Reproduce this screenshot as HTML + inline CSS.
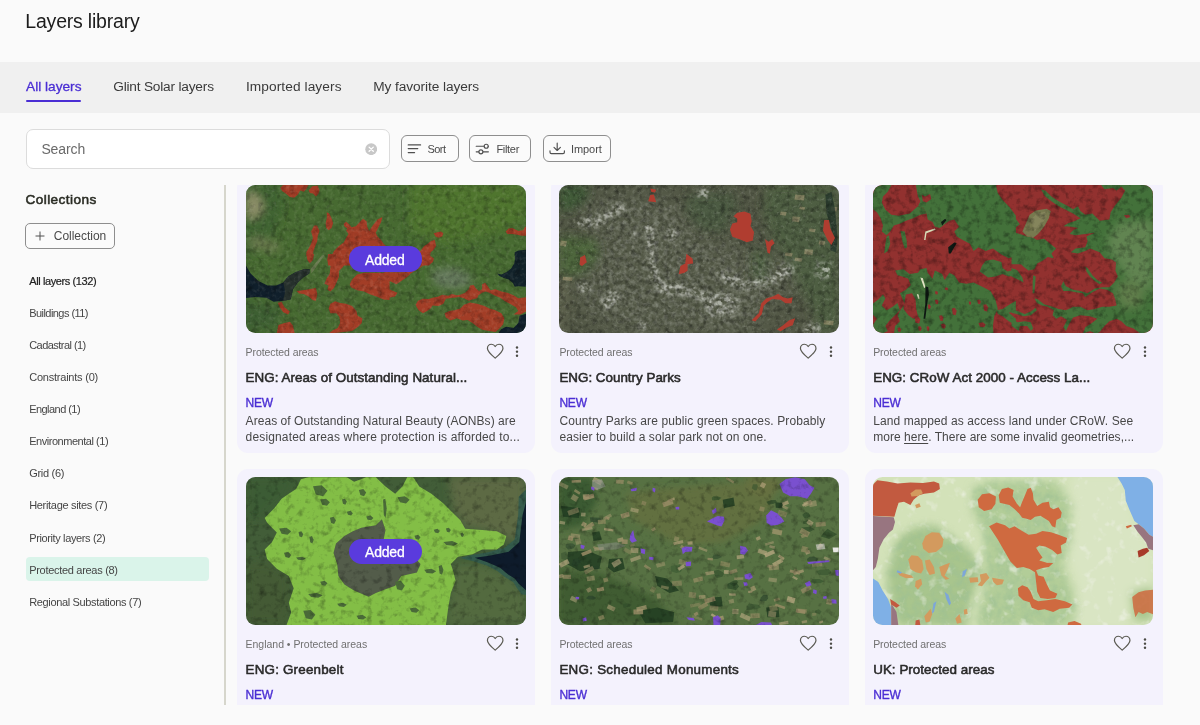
<!DOCTYPE html><html lang="en"><head><meta charset="utf-8"><title>Layers library</title><style>
*{box-sizing:border-box;margin:0;padding:0}
html,body{width:1200px;height:725px;overflow:hidden;background:#fafafa}
body{font-family:"Liberation Sans",sans-serif;color:#2b2b2b;position:relative;will-change:transform;opacity:0.9999}
.t{position:absolute;white-space:nowrap}
h1{position:absolute;white-space:nowrap;font-weight:400;color:#1c1c1c}
.tabbar{position:absolute;left:0;top:62px;width:1200px;height:50.5px;background:#f0f0f0}
.tab{color:#3a3a3a}
.tab.on{color:#4a2ed4;-webkit-text-stroke:0.3px #4a2ed4}
.uline{position:absolute;left:25.8px;top:99.6px;width:55px;height:2px;background:#4a2ed4;border-radius:1.2px}
.search{position:absolute;left:26px;top:128.5px;width:363.5px;height:40px;background:#fff;border:1px solid #dcdcdc;border-radius:7px}
.ph{color:#6a6a6a}
.clr{position:absolute;left:365px;top:142.8px;width:12.4px;height:12.4px}
.btn{position:absolute;border:1px solid #8e8e8e;border-radius:6px;background:#fbfbfb}
.bt{color:#4a4a4a}
.ico{position:absolute}
.coll{color:#2a2c24;-webkit-text-stroke:0.55px #2a2c24}
.li{color:#454545}
.sel{position:absolute;left:25.5px;top:557.1px;width:183.3px;height:24px;background:#daf4ea;border-radius:4px}
.vline{position:absolute;left:224.3px;top:184.8px;width:1.6px;height:520.2px;background:#d6d6cc}
.clip{position:absolute;left:230px;top:184.8px;width:970px;height:520.2px;overflow:hidden}
.card{position:absolute;width:298.2px;height:276px;background:#f4f2fd;border-radius:11px}
.card svg.map{position:absolute;left:8.4px;top:8.1px;width:280px;height:148.2px;border-radius:9.5px;display:block}
.cat{color:#707070}
.ttl{color:#2a2a2a;-webkit-text-stroke:0.55px #2a2a2a}
.new{color:#4a2ed4;-webkit-text-stroke:0.35px #4a2ed4}
.desc{color:#474747}
.heart{position:absolute;left:248.4px;top:166.3px}
.keb{position:absolute;left:278px;top:169.0px}
.added{position:absolute;left:112px;top:69.7px;width:73px;height:25.4px;border-radius:12.7px;background:#5a3bdd}
.addt{color:#fff;-webkit-text-stroke:0.3px #fff}
u{text-underline-offset:1.5px;text-decoration-thickness:1px}
</style></head><body>
<h1 style="left:25.3px;top:9.24px;font-size:19.5px;line-height:24px;letter-spacing:-0.203px">Layers library</h1>
<div class="tabbar"></div>
<div class="t tab on" style="left:26.1px;top:77.95px;font-size:13.7px;line-height:18px;letter-spacing:-0.014px;">All layers</div>
<div class="t tab" style="left:113.2px;top:77.95px;font-size:13.7px;line-height:18px;letter-spacing:-0.201px;">Glint Solar layers</div>
<div class="t tab" style="left:245.9px;top:77.95px;font-size:13.7px;line-height:18px;letter-spacing:0.091px;">Imported layers</div>
<div class="t tab" style="left:373.2px;top:77.95px;font-size:13.7px;line-height:18px;letter-spacing:-0.073px;">My favorite layers</div>
<div class="uline"></div>
<div class="search"></div>
<div class="t ph" style="left:41.4px;top:140.15px;font-size:14px;line-height:18px;letter-spacing:-0.112px;">Search</div>
<svg class="clr" viewBox="0 0 13 13"><circle cx="6.5" cy="6.5" r="6.2" fill="#c8c8c8"/><path d="M4.3 4.3 L8.7 8.7 M8.7 4.3 L4.3 8.7" stroke="#fff" stroke-width="1.4" stroke-linecap="round"/></svg>
<div class="btn" style="left:400.6px;top:135.1px;width:58.2px;height:27px"></div>
<svg class="ico" style="left:406px;top:142px" width="17" height="14" viewBox="0 0 17 14"><path d="M2.2 2.9 H14.6 M2.2 6.6 H11.8 M2.2 10.6 H8.6" stroke="#505050" stroke-width="1.15" stroke-linecap="round" fill="none"/></svg>
<div class="t bt" style="left:427.4px;top:142.29px;font-size:11px;line-height:14px;letter-spacing:-0.525px;">Sort</div>
<div class="btn" style="left:469.4px;top:135.1px;width:62.1px;height:27px"></div>
<svg class="ico" style="left:474px;top:142px" width="17" height="14" viewBox="0 0 17 14"><path d="M2.2 4.2 H9.9 M14.3 4.2 H14.4 M2.2 9.8 H4.7 M9.1 9.8 H14.4" stroke="#505050" stroke-width="1.15" stroke-linecap="round" fill="none"/><circle cx="12.2" cy="4.2" r="2" fill="none" stroke="#505050" stroke-width="1.15"/><circle cx="6.9" cy="9.8" r="2" fill="none" stroke="#505050" stroke-width="1.15"/></svg>
<div class="t bt" style="left:496.4px;top:142.29px;font-size:11px;line-height:14px;letter-spacing:-0.309px;">Filter</div>
<div class="btn" style="left:542.8px;top:135.1px;width:67.8px;height:27px"></div>
<svg class="ico" style="left:548px;top:141px" width="18" height="15" viewBox="0 0 18 15"><path d="M9.2 2 V9.4 M6 6.4 L9.2 9.5 L12.4 6.4 M2 9.8 V11.2 Q2 12.6 3.4 12.6 H15 Q16.4 12.6 16.4 11.2 V9.8" stroke="#505050" stroke-width="1.15" stroke-linecap="round" stroke-linejoin="round" fill="none"/></svg>
<div class="t bt" style="left:571px;top:142.29px;font-size:11px;line-height:14px;letter-spacing:-0.075px;">Import</div>
<div class="t coll" style="left:25.4px;top:191.19px;font-size:13.6px;line-height:18px;letter-spacing:0.451px;">Collections</div>
<div class="btn" style="left:25.3px;top:223px;width:89.7px;height:26px;border-radius:5px"></div>
<svg class="ico" style="left:35.3px;top:230.7px" width="10" height="10" viewBox="0 0 11 11"><path d="M5.5 1 V10 M1 5.5 H10" stroke="#505050" stroke-width="1.1" stroke-linecap="round"/></svg>
<div class="t bt" style="left:53.8px;top:228.74px;font-size:12px;line-height:14px;letter-spacing:-0.033px;">Collection</div>
<div class="sel"></div>
<div class="t li" style="left:29.2px;top:273.99px;font-size:11px;line-height:14px;letter-spacing:-0.391px;color:#222;-webkit-text-stroke:0.2px #222;">All layers (132)</div>
<div class="t li" style="left:29.2px;top:306.06px;font-size:11px;line-height:14px;letter-spacing:-0.549px;">Buildings (11)</div>
<div class="t li" style="left:29.2px;top:338.13px;font-size:11px;line-height:14px;letter-spacing:-0.54px;">Cadastral (1)</div>
<div class="t li" style="left:29.2px;top:370.2px;font-size:11px;line-height:14px;letter-spacing:-0.224px;">Constraints (0)</div>
<div class="t li" style="left:29.2px;top:402.27px;font-size:11px;line-height:14px;letter-spacing:-0.547px;">England (1)</div>
<div class="t li" style="left:29.2px;top:434.34px;font-size:11px;line-height:14px;letter-spacing:-0.463px;">Environmental (1)</div>
<div class="t li" style="left:29.2px;top:466.41px;font-size:11px;line-height:14px;letter-spacing:-0.297px;">Grid (6)</div>
<div class="t li" style="left:29.2px;top:498.48px;font-size:11px;line-height:14px;letter-spacing:-0.315px;">Heritage sites (7)</div>
<div class="t li" style="left:29.2px;top:530.55px;font-size:11px;line-height:14px;letter-spacing:-0.374px;">Priority layers (2)</div>
<div class="t li" style="left:29.2px;top:562.62px;font-size:11px;line-height:14px;letter-spacing:-0.298px;">Protected areas (8)</div>
<div class="t li" style="left:29.2px;top:594.69px;font-size:11px;line-height:14px;letter-spacing:-0.35px;">Regional Substations (7)</div>
<div class="vline"></div>
<div class="clip">
<div class="card" style="left:7.2px;top:-8.0px"><svg class="map" viewBox="0 0 280 148" preserveAspectRatio="none"><defs><filter id="n1" x="0" y="0" width="100%" height="100%"><feTurbulence type="fractalNoise" baseFrequency="0.16" numOctaves="3" seed="4"/><feColorMatrix values="0 0 0 0 0  0 0 0 0 0  0 0 0 0 0  0.5 0.5 0 0 -0.47"/></filter><filter id="l1" x="0" y="0" width="100%" height="100%"><feTurbulence type="fractalNoise" baseFrequency="0.25" numOctaves="3" seed="9"/><feColorMatrix values="0 0 0 0 1  0 0 0 0 1  0 0 0 0 0.85  0.6 0 0.6 0 -0.58"/></filter><filter id="g1" filterUnits="userSpaceOnUse" x="0" y="0" width="280" height="148"><feGaussianBlur stdDeviation="4"/></filter></defs><rect width="280" height="148" fill="#476a31"/><g filter="url(#g1)"><polygon points="-2.6,-1.8 33.6,-1.8 37.3,22.4 28.8,46.5 11.9,65.9 -2.6,70.7" fill="#3f6330" /><polygon points="163.6,-1.8 279.6,-1.8 279.6,34.4 248.1,48.9 199.8,58.6 163.6,44.1" fill="#50742f" /><polygon points="185.3,84.7 207.1,81.1 224.0,88.3 226.4,100.4 207.1,105.2 187.7,100.4" fill="#63785a" /><polygon points="-0.2,10.3 4.6,6.7 11.9,10.3 16.7,17.5 17.3,24.8 13.1,29.6 7.1,34.4 1.0,32.0" fill="#8c8e68" /><polygon points="2.2,55.0 11.9,51.4 24.0,56.2 36.1,61.0 30.0,67.1 16.7,64.7 4.6,62.2" fill="#6d7d50" /><polygon points="-2.6,116.1 21.6,118.5 37.3,125.8 28.8,142.7 -2.6,147.5" fill="#3c5e30" /></g><polygon points="-3.8,77.4 0.4,81.1 4.6,88.3 11.9,95.6 21.6,100.4 30.0,100.4 37.3,97.4 42.1,91.3 49.4,87.1 57.8,84.1 63.9,84.1 63.3,88.3 57.8,91.9 51.8,97.4 46.9,104.0 45.7,110.1 44.5,114.3 37.3,115.5 27.6,116.7 20.4,112.5 9.5,111.9 -3.8,113.1" fill="#101f2b" /><polygon points="37.3,97.4 42.1,91.3 49.4,87.1 57.8,84.1 63.9,84.1 63.3,88.3 57.8,91.9 51.8,97.4 46.9,104.0 45.7,110.1 44.5,114.3 37.3,115.5 39.1,106.4" fill="#26302c" /><polygon points="251.2,88.3 255.4,89.5 260.2,87.1 265.1,83.5 268.1,78.7 269.3,72.6 268.7,69.0 280.8,69.0 280.8,101.6 272.3,101.0 268.7,101.6 266.9,98.0 262.6,94.4 257.2,92.6 253.0,90.7" fill="#12222a" /><polygon points="268.7,67.1 272.3,65.3 280.8,64.7 280.8,80.4 269.3,80.4" fill="#12222a" /><polygon points="251.8,148.7 255.4,143.9 260.2,141.5 267.5,142.7 272.3,137.9 273.5,130.6 280.8,128.2 280.8,148.7" fill="#101f2b" /><polygon points="65.1,83.5 69.9,77.4 75.9,70.2 78.4,70.2 72.3,78.7 67.5,85.9 65.1,88.3" fill="#6e7b55" opacity="0.8"/><polygon points="34.3,3.0 38.5,-1.8 63.3,-1.8 60.2,4.2 57.8,6.7 54.2,5.4 51.8,9.7 48.1,12.7 43.9,12.1 39.7,8.5 36.1,6.1" fill="#a23d26" /><polygon points="62.6,5.4 66.3,1.2 71.7,0.6 73.5,5.4 72.3,9.1 69.9,11.5 66.9,8.5 63.9,7.9" fill="#a23d26" /><polygon points="80.8,27.2 83.2,28.4 85.6,33.2 87.1,38.1 85.6,42.9 82.6,45.1 80.2,42.9 79.6,38.1 80.8,33.2" fill="#a23d26" /><polygon points="65.1,46.5 68.1,40.5 71.1,40.5 73.5,45.9 71.7,51.4 71.3,56.2 69.3,61.0 67.5,65.9 66.9,71.9 63.3,77.3 61.4,73.1 60.2,67.1 62.6,63.4 65.1,58.6 66.9,52.6" fill="#a23d26" /><polygon points="97.7,38.7 100.1,36.6 103.1,39.3 105.5,42.3 109.8,41.1 113.4,37.5 117.0,33.8 120.6,36.3 121.3,41.7 123.1,45.9 126.7,40.5 131.5,34.4 136.4,32.0 135.1,36.9 132.1,42.9 129.7,47.7 131.5,51.4 135.1,55.0 137.6,58.6 140.0,61.0 140.0,80.4 82.0,80.4 81.4,73.7 85.6,70.7 88.0,65.9 92.9,61.0 97.7,57.4 100.1,52.6 102.5,48.9 100.1,45.3 101.3,43.5 98.3,41.1" fill="#a23d26" /><polygon points="187.7,48.3 191.4,47.1 195.0,46.5 197.4,48.3 196.2,51.4 192.6,52.8 189.5,51.4" fill="#a23d26" /><polygon points="185.3,55.6 188.9,55.0 190.1,61.0 187.7,64.7 184.7,67.1 184.1,70.7 187.7,73.1 187.1,76.7 182.9,80.4 137.0,80.4 137.0,61.0 174.4,65.9 178.1,61.0 181.7,58.6" fill="#a23d26" /><polygon points="259.6,46.5 262.6,43.5 266.3,42.9 269.9,44.7 272.3,45.9 277.1,45.3 279.0,41.7 280.8,41.7 280.8,50.8 275.9,50.8 271.1,49.6 266.3,48.9 261.4,48.9" fill="#a23d26" /><polygon points="60.2,69.0 68.1,69.0 66.9,75.0 63.9,78.1 61.4,75.0" fill="#a23d26" /><polygon points="82.0,69.0 103.7,69.0 100.1,77.4 96.5,82.3 92.9,85.9 92.9,91.9 90.4,98.0 88.0,102.8 84.4,106.4 81.4,104.6 82.6,100.4 78.4,98.6 80.8,93.2 83.8,88.3 84.4,81.1 81.4,75.0" fill="#a23d26" /><polygon points="103.7,99.2 106.1,94.4 111.0,89.5 118.2,87.7 143.6,87.7 143.6,114.9 137.6,114.3 130.3,111.3 123.1,108.9 118.2,106.4 111.0,105.2 104.9,102.2" fill="#a23d26" /><polygon points="50.6,105.8 60.2,104.6 69.9,102.8 71.3,108.9 69.9,115.5 66.9,115.1 62.6,111.3 57.8,108.9 53.0,108.3" fill="#a23d26" /><polygon points="31.8,117.9 35.5,116.7 38.5,122.2 43.9,126.4 42.1,129.4 37.3,127.0 33.6,122.2" fill="#a23d26" /><polygon points="82.6,123.4 84.4,118.5 89.2,116.1 94.1,117.9 100.1,118.5 106.1,120.9 110.4,125.8 111.6,130.6 116.4,133.0 115.8,137.9 112.2,141.5 106.1,145.7 82.0,148.7 86.8,145.1 91.6,142.7 94.1,137.9 93.5,131.8 90.4,128.2 84.4,128.2" fill="#a23d26" /><polygon points="30.6,148.7 32.4,139.7 38.5,137.9 43.9,136.7 46.9,140.3 48.8,148.7" fill="#a23d26" /><polygon points="175.6,69.0 187.7,73.8 185.3,77.4 178.1,79.9 173.2,83.5 164.8,88.3 161.1,91.9 153.9,96.8 150.3,99.2 144.2,96.2 138.2,95.6 138.2,87.1 157.5,87.1 169.6,85.9 175.6,79.9" fill="#a23d26" /><polygon points="138.2,102.8 144.2,104.6 151.5,107.7 149.1,111.3 143.0,112.5 138.2,114.3" fill="#a23d26" /><polygon points="169.6,119.7 172.0,115.5 176.9,113.7 182.9,113.9 186.5,112.5 192.6,111.3 196.2,109.5 202.2,110.7 205.9,108.9 210.7,110.1 214.3,109.5 219.1,107.7 222.8,104.0 224.0,100.4 227.6,99.8 230.0,103.4 233.0,105.8 236.1,104.0 236.1,99.2 239.1,97.7 242.1,101.6 244.5,105.2 249.4,104.0 255.4,106.4 261.4,107.7 267.5,110.1 272.3,113.1 280.8,111.9 280.8,125.8 274.7,129.4 267.5,129.4 272.3,125.8 269.9,122.2 263.9,118.5 259.0,116.1 254.2,112.5 248.1,110.1 243.3,107.7 239.7,106.4 236.1,107.7 232.4,110.1 231.2,113.1 226.4,114.3 222.8,115.5 217.9,113.1 213.1,111.9 207.1,112.5 199.8,113.7 197.4,118.5 192.6,120.9 186.5,120.3 184.7,123.4 181.1,125.8 176.9,128.0 172.6,125.2 170.8,122.2" fill="#a23d26" /><polygon points="198.6,128.2 203.4,125.8 208.3,125.2 214.3,123.4 217.9,119.7 224.0,117.3 231.2,118.5 238.5,120.9 243.3,123.4 249.4,125.2 255.4,128.2 258.4,133.0 257.2,139.1 253.0,143.9 249.4,146.9 243.3,145.7 236.1,144.5 231.2,141.5 226.4,137.9 221.6,134.8 216.7,135.4 210.7,133.0 204.6,135.4 199.8,132.4" fill="#a23d26" /><rect width="280" height="148" filter="url(#n1)"/><rect width="280" height="148" filter="url(#l1)" opacity="0.3"/></svg><div class="added"></div><div class="t addt" style="left:127.9px;top:75.25px;font-size:14px;line-height:16px;letter-spacing:-0.221px;">Added</div><div class="t cat" style="left:8.4px;top:167.96px;font-size:10.5px;line-height:14px;letter-spacing:-0.08px;">Protected areas</div><svg class="heart" width="18.4" height="16.4" viewBox="0 0 18 16"><path d="M9 14.8 C4.6 11 1.4 8.3 1.4 5.3 C1.4 2.9 3.2 1.2 5.3 1.2 C6.9 1.2 8.3 2.1 9 3.4 C9.7 2.1 11.1 1.2 12.7 1.2 C14.8 1.2 16.6 2.9 16.6 5.3 C16.6 8.3 13.4 11 9 14.8 Z" fill="none" stroke="#5a5a52" stroke-width="1.2" stroke-linejoin="round"/></svg><svg class="keb" width="4" height="11.4" viewBox="0 0 4 11.4"><circle cx="2" cy="1.5" r="1.2" fill="#4a4a44"/><circle cx="2" cy="5.65" r="1.2" fill="#4a4a44"/><circle cx="2" cy="9.8" r="1.2" fill="#4a4a44"/></svg><div class="t ttl" style="left:8.4px;top:191.76px;font-size:13.4px;line-height:18px;letter-spacing:0.06px;">ENG: Areas of Outstanding Natural...</div><div class="t new" style="left:8.4px;top:218.74px;font-size:12px;line-height:15px;letter-spacing:-0.198px;">NEW</div><div class="t desc" style="left:8.4px;top:235.74px;font-size:12px;line-height:16px;letter-spacing:0.055px;">Areas of Outstanding Natural Beauty (AONBs) are</div><div class="t desc" style="left:8.4px;top:252.49px;font-size:12px;line-height:16px;letter-spacing:0.152px;">designated areas where protection is afforded to...</div></div>
<div class="card" style="left:321.0px;top:-8.0px"><svg class="map" viewBox="0 0 280 148" preserveAspectRatio="none"><defs><filter id="n2" x="0" y="0" width="100%" height="100%"><feTurbulence type="fractalNoise" baseFrequency="0.18" numOctaves="3" seed="7"/><feColorMatrix values="0 0 0 0 0  0 0 0 0 0  0 0 0 0 0  0.6 0.6 0 0 -0.55"/></filter><filter id="l2" x="0" y="0" width="100%" height="100%"><feTurbulence type="fractalNoise" baseFrequency="0.3" numOctaves="3" seed="2"/><feColorMatrix values="0 0 0 0 0.8  0 0 0 0 0.82  0 0 0 0 0.76  1.0 0 1.0 0 -1.05"/></filter><filter id="g2" filterUnits="userSpaceOnUse" x="0" y="0" width="280" height="148"><feGaussianBlur stdDeviation="5"/></filter><filter id="u2b" filterUnits="userSpaceOnUse" x="0" y="0" width="280" height="148"><feGaussianBlur in="SourceGraphic" stdDeviation="7" result="b"/><feTurbulence type="fractalNoise" baseFrequency="0.22" numOctaves="2" seed="31" result="t"/><feColorMatrix in="t" values="0 0 0 0 0.8  0 0 0 0 0.81  0 0 0 0 0.77  2.4 0 2.4 0 -2.05" result="sp"/><feComposite in="sp" in2="b" operator="in"/></filter><filter id="u2" filterUnits="userSpaceOnUse" x="0" y="0" width="280" height="148"><feGaussianBlur in="SourceGraphic" stdDeviation="2.2" result="b"/><feTurbulence type="fractalNoise" baseFrequency="0.24" numOctaves="2" seed="12" result="t"/><feColorMatrix in="t" values="0 0 0 0 0.8  0 0 0 0 0.81  0 0 0 0 0.77  2.4 0 2.4 0 -2.05" result="sp"/><feComposite in="sp" in2="b" operator="in"/></filter></defs><rect width="280" height="148" fill="#535846"/><g filter="url(#g2)"><polygon points="207.2,-0.2 279.7,-0.2 279.7,148.2 260.3,148.2 250.7,120.7 236.2,96.5 226.5,74.8 212.0,50.6 202.3,24.0" fill="#4c6440" opacity="0.55"/><polygon points="-0.2,-0.2 30.8,-0.2 25.9,16.8 9.0,26.4 -0.2,24.0" fill="#3c5a36" opacity="0.8"/><polygon points="-0.2,50.6 18.7,51.8 38.0,55.4 40.4,69.9 30.8,84.4 13.8,91.7 -0.2,89.2" fill="#4b7038" opacity="0.6"/><polygon points="129.8,9.5 173.3,7.1 178.2,24.0 163.7,48.2 139.5,43.3 125.0,24.0" fill="#4a5e3f" opacity="0.6"/><polygon points="-0.2,91.7 11.4,94.1 9.0,120.7 4.2,148.2 -0.2,148.2" fill="#6b6d55" opacity="0.6"/><polygon points="192.7,62.7 212.0,67.5 207.2,96.5 192.7,91.7" fill="#48603c" opacity="0.6"/></g><polygon points="236.2,9.5 245.8,10.2 244.9,15.5 235.4,14.6" fill="#a79a76" opacity="0.6"/><polygon points="233.7,31.2 241.0,32.0 240.0,37.3 233.0,36.3" fill="#a79a76" opacity="0.6"/><polygon points="245.8,63.9 254.3,64.6 253.3,69.9 245.1,68.9" fill="#a79a76" opacity="0.6"/><polygon points="236.2,72.3 243.4,73.1 242.4,76.7 235.4,75.7" fill="#a79a76" opacity="0.6"/><polygon points="221.7,26.4 227.7,27.1 226.7,30.8 220.9,29.8" fill="#a79a76" opacity="0.6"/><polygon points="260.3,55.4 266.4,56.1 265.4,60.2 259.6,59.3" fill="#a79a76" opacity="0.6"/><polygon points="226.5,67.5 233.7,68.2 232.8,71.4 225.8,70.4" fill="#a79a76" opacity="0.6"/><polygon points="272.4,21.6 278.5,22.3 277.5,26.4 271.7,25.4" fill="#a79a76" opacity="0.6"/><polygon points="265.2,135.2 274.8,135.9 273.9,140.0 264.4,139.0" fill="#a79a76" opacity="0.6"/><polygon points="4.2,91.7 13.8,92.4 12.9,96.0 3.4,95.0" fill="#a79a76" opacity="0.6"/><polygon points="1.7,55.4 7.8,56.1 6.8,61.5 1.0,60.5" fill="#a79a76" opacity="0.6"/><polygon points="250.7,43.3 256.7,44.1 255.7,47.2 249.9,46.2" fill="#a79a76" opacity="0.6"/><polygon points="241.0,21.6 246.3,22.3 245.3,25.0 240.3,24.0" fill="#a79a76" opacity="0.6"/><g filter="url(#u2b)" opacity="0.2"><polygon points="13.8,24.0 67.0,9.5 120.2,19.2 129.8,43.3 163.7,57.8 207.2,74.8 236.2,74.8 238.6,96.5 212.0,120.7 192.7,144.8 67.0,144.8 30.8,130.3 16.2,96.5 42.8,74.8 38.0,48.2" fill="#a3a69c" /></g><g filter="url(#u2)" opacity="0.6"><polygon points="83.9,36.1 93.6,38.5 98.4,57.8 96.0,74.8 103.2,96.5 129.8,98.9 149.2,108.6 168.5,106.2 180.6,115.8 178.2,130.3 163.7,132.8 154.0,120.7 129.8,111.0 100.8,108.6 91.2,91.7 88.8,67.5" fill="#a3a69c" /><polygon points="156.4,84.4 173.3,86.8 187.8,96.5 207.2,91.7 226.5,78.4 236.2,82.0 231.3,90.5 212.0,98.9 187.8,106.2 173.3,101.3 161.2,94.1" fill="#a3a69c" /><polygon points="16.2,34.9 30.8,31.2 42.8,28.8 64.6,19.2 67.0,25.2 47.7,34.9 38.0,43.3 18.7,42.1" fill="#a3a69c" /><polygon points="18.7,96.5 30.8,98.9 33.2,106.2 21.1,108.6" fill="#a3a69c" /><polygon points="42.8,108.6 59.8,105.0 62.2,115.8 47.7,125.5 41.6,118.2" fill="#a3a69c" /><polygon points="137.1,4.7 149.2,2.2 151.6,11.9 139.5,14.3" fill="#a3a69c" /><polygon points="255.5,78.4 272.4,77.2 273.6,91.7 257.9,94.1" fill="#a3a69c" /><polygon points="71.8,45.8 79.1,47.0 77.9,54.2 71.3,53.0" fill="#a3a69c" /><polygon points="221.7,77.2 236.2,79.6 235.0,88.0 222.9,85.6" fill="#a3a69c" /><polygon points="245.8,140.0 260.3,135.2 262.8,148.2 243.4,148.2" fill="#a3a69c" /><polygon points="79.1,135.2 86.3,134.0 87.5,144.8 79.1,146.0" fill="#a3a69c" /><polygon points="52.5,16.8 67.0,19.2 64.6,28.8 54.9,26.4" fill="#a3a69c" /><polygon points="108.1,43.3 120.2,45.8 115.3,57.8 105.7,53.0" fill="#a3a69c" /><polygon points="144.3,111.0 163.7,113.4 168.5,130.3 149.2,132.8" fill="#a3a69c" /></g><polygon points="266.4,9.5 272.4,7.1 276.0,24.0 278.5,53.0 277.2,67.5 271.2,65.1 272.4,43.3 267.6,28.8" fill="#24362a" opacity="0.8"/><rect width="280" height="148" filter="url(#n2)"/><rect width="280" height="148" filter="url(#l2)" opacity="0.3"/><polygon points="174.5,31.2 178.2,27.6 185.4,26.4 191.5,28.8 192.7,36.1 191.5,40.9 195.1,47.0 193.9,55.4 187.8,57.1 180.6,54.2 173.3,51.8 170.9,44.5 173.3,38.5 178.2,37.3 178.2,33.7" fill="#b03d30" /><polygon points="91.2,10.0 94.8,9.5 97.2,17.2 89.2,16.3" fill="#b03d30" /><polygon points="91.2,3.5 97.2,4.7 96.0,7.6 92.4,7.1" fill="#b03d30" /><polygon points="265.2,34.9 270.0,34.9 271.2,43.3 276.0,53.0 272.4,59.8 268.8,55.4 264.0,45.8" fill="#b03d30" /><polygon points="206.0,54.2 209.6,56.6 213.2,54.2 215.6,58.3 212.0,61.5 210.8,68.7 208.4,67.5 207.2,60.2" fill="#b03d30" /><polygon points="21.1,72.3 25.9,69.9 27.8,77.2 23.0,80.8 20.6,79.6" fill="#b03d30" /><polygon points="127.4,68.7 133.5,73.5 134.2,78.4 128.6,79.1 128.6,85.6 125.0,88.0 119.7,89.2 121.4,80.8 126.2,78.4" fill="#b03d30" /><polygon points="192.7,135.2 199.9,127.9 202.3,118.2 207.2,113.4 214.4,111.0 219.2,108.6 224.1,112.2 228.9,113.4 233.7,112.2 232.5,118.2 226.5,118.2 221.7,114.6 213.2,113.9 208.4,117.0 204.8,120.7 202.8,129.1 196.3,136.4" fill="#b03d30" /><polygon points="218.0,144.3 224.1,140.0 230.1,135.2 236.2,133.2 233.7,140.0 227.7,142.4 221.7,146.0" fill="#b03d30" /></svg><div class="t cat" style="left:8.4px;top:167.96px;font-size:10.5px;line-height:14px;letter-spacing:-0.08px;">Protected areas</div><svg class="heart" width="18.4" height="16.4" viewBox="0 0 18 16"><path d="M9 14.8 C4.6 11 1.4 8.3 1.4 5.3 C1.4 2.9 3.2 1.2 5.3 1.2 C6.9 1.2 8.3 2.1 9 3.4 C9.7 2.1 11.1 1.2 12.7 1.2 C14.8 1.2 16.6 2.9 16.6 5.3 C16.6 8.3 13.4 11 9 14.8 Z" fill="none" stroke="#5a5a52" stroke-width="1.2" stroke-linejoin="round"/></svg><svg class="keb" width="4" height="11.4" viewBox="0 0 4 11.4"><circle cx="2" cy="1.5" r="1.2" fill="#4a4a44"/><circle cx="2" cy="5.65" r="1.2" fill="#4a4a44"/><circle cx="2" cy="9.8" r="1.2" fill="#4a4a44"/></svg><div class="t ttl" style="left:8.4px;top:191.76px;font-size:13.4px;line-height:18px;letter-spacing:0.0px;">ENG: Country Parks</div><div class="t new" style="left:8.4px;top:218.74px;font-size:12px;line-height:15px;letter-spacing:-0.198px;">NEW</div><div class="t desc" style="left:8.4px;top:235.74px;font-size:12px;line-height:16px;letter-spacing:0.111px;">Country Parks are public green spaces. Probably</div><div class="t desc" style="left:8.4px;top:252.49px;font-size:12px;line-height:16px;letter-spacing:0.079px;">easier to build a solar park not on one.</div></div>
<div class="card" style="left:634.8px;top:-8.0px"><svg class="map" viewBox="0 0 280 148" preserveAspectRatio="none"><defs><filter id="n3" x="0" y="0" width="100%" height="100%"><feTurbulence type="fractalNoise" baseFrequency="0.15" numOctaves="3" seed="5"/><feColorMatrix values="0 0 0 0 0  0 0 0 0 0  0 0 0 0 0  0.6 0.6 0 0 -0.56"/></filter><filter id="g3" filterUnits="userSpaceOnUse" x="0" y="0" width="280" height="148"><feGaussianBlur stdDeviation="4"/></filter></defs><rect width="280" height="148" fill="#92312f"/><polygon points="42.6,-1.8 122.4,-1.8 124.8,7.9 129.6,15.1 136.9,22.4 142.9,30.8 142.9,70.7 135.7,73.1 128.4,69.5 119.9,63.4 112.7,65.9 105.4,62.2 100.6,65.9 97.0,58.6 89.7,55.0 83.7,51.4 81.3,46.5 86.1,41.7 81.3,34.4 76.4,35.7 71.6,39.3 66.8,42.9 61.9,41.7 59.5,36.9 54.7,34.4 53.5,28.4 49.9,22.4 45.0,21.2 47.4,16.3 45.0,11.5 43.8,5.4" fill="#43713a" /><polygon points="-0.9,10.3 2.7,1.8 10.0,-0.6 18.4,0.0 14.8,6.7 10.0,11.5 8.8,17.5 12.4,24.8 18.4,29.6 25.7,30.8 36.6,28.4 45.0,21.2 49.9,22.4 53.5,28.4 47.4,29.6 40.2,33.2 32.9,35.7 28.1,38.1 20.9,40.5 17.2,46.5 13.6,50.2 8.8,46.5 10.0,40.5 7.6,33.2 3.9,27.2 -0.9,23.6" fill="#43713a" /><polygon points="27.5,45.9 31.7,46.5 33.6,55.0 34.2,62.2 31.7,63.4 29.3,56.2" fill="#43713a" /><polygon points="13.6,51.4 16.0,50.2 17.2,58.6 14.8,65.9 11.2,68.3 12.4,58.6" fill="#43713a" /><polygon points="48.7,9.7 52.3,11.5 57.1,9.1 58.3,13.9 53.5,17.5 49.9,16.3" fill="#92312f" /><polygon points="52.3,46.5 61.9,43.5 62.6,44.7 53.5,48.3 52.5,55.0 51.1,55.0" fill="#d9dcb8" /><polygon points="68.0,36.9 72.2,33.8 73.4,35.1 69.2,40.5" fill="#0f1a14" /><polygon points="75.2,62.2 81.3,57.4 83.7,58.0 77.7,68.3 75.8,68.3" fill="#0f1a14" /><polygon points="168.1,4.8 172.3,5.4 178.4,11.5 185.6,16.3 192.9,19.9 200.1,24.2 204.9,21.2 207.4,26.0 212.2,29.6 219.4,28.4 226.7,35.7 236.4,34.4 237.6,27.2 242.4,19.9 248.4,12.7 252.1,5.4 248.4,1.8 243.6,5.4 240.0,3.0 231.5,4.2 226.7,-1.8 272.6,-1.8 279.9,5.4 279.9,79.2 246.0,79.2 238.8,74.3 231.5,73.1 226.7,67.1 217.0,63.4 212.2,65.9 204.9,68.3 197.7,67.1 202.5,63.4 212.2,62.2 214.6,56.2 213.4,51.4 221.9,47.7 212.2,48.9 202.5,50.2 196.5,48.9 200.1,45.3 204.9,42.9 197.7,41.7 190.4,41.1 195.3,38.1 202.5,35.7 207.4,33.2 200.1,28.4 192.9,24.8 185.6,21.2 178.4,16.3 172.3,11.5" fill="#43713a" /><polygon points="138.5,46.5 146.9,48.9 154.2,51.4 160.2,52.6 163.9,55.0 171.1,53.8 177.2,58.6 183.2,63.4 178.4,68.3 180.8,73.1 174.7,71.9 169.9,75.5 162.7,79.2 138.5,79.2" fill="#43713a" /><polygon points="138.5,29.6 143.3,34.4 146.9,39.3 142.1,42.9 138.5,41.7" fill="#43713a" /><polygon points="153.0,38.1 156.6,29.6 162.7,25.4 173.5,23.6 177.8,26.0 175.9,33.2 171.1,41.7 165.1,48.9 160.2,52.6 154.2,51.4 149.4,46.5" fill="#77794f" /><polygon points="157.8,34.4 163.9,28.4 172.3,26.6 173.5,32.0 167.5,40.5 161.4,46.5" fill="#8c8a62" opacity="0.7"/><polygon points="250.9,30.2 255.7,29.6 257.5,32.0 253.3,33.2" fill="#92312f" /><polygon points="22.1,85.3 30.5,84.1 36.6,88.9 45.0,87.7 47.4,84.1 53.5,82.9 54.7,87.7 59.5,93.7 61.9,85.3 69.2,88.9 71.6,94.9 76.4,87.7 81.3,90.1 86.1,97.4 93.4,98.6 100.6,97.4 110.3,102.2 117.5,105.8 122.4,114.3 124.8,123.9 121.2,131.2 119.9,140.9 120.6,148.7 20.9,148.7 22.1,140.9 26.9,136.0 24.5,130.0 28.1,123.9 31.7,119.1 29.3,113.1 26.9,108.2 32.9,104.6 37.8,99.8 35.4,93.7 29.3,91.3 24.5,90.1" fill="#43713a" /><polygon points="-0.9,119.1 5.2,114.3 10.0,109.4 12.4,113.1 8.8,120.3 13.6,125.2 19.7,121.5 24.5,117.9 26.9,125.2 20.9,131.2 16.0,136.0 12.4,140.9 14.8,145.7 8.8,148.7 -0.9,148.7 -0.9,140.9 3.9,133.6 -0.9,128.8" fill="#43713a" /><polygon points="109.1,80.4 112.7,75.6 119.9,74.4 128.4,76.8 129.6,82.9 134.4,86.5 142.9,84.1 142.9,90.1 135.7,91.3 129.6,88.9 122.4,91.3 115.1,92.5 110.3,88.9 106.7,86.5" fill="#43713a" /><polygon points="123.6,125.2 129.6,123.9 136.9,119.1 142.9,115.5 142.9,126.4 135.7,127.6 142.9,133.6 142.9,139.7 135.7,136.0 129.6,131.2 124.8,128.8" fill="#43713a" /><polygon points="32.9,109.4 39.0,108.2 42.6,114.3 43.2,123.9 45.0,131.2 40.2,133.6 35.4,130.0 30.5,123.9 31.7,115.5" fill="#92312f" /><polygon points="78.9,123.3 81.8,122.7 83.7,125.6 82.7,130.0 79.8,129.3" fill="#92312f" /><polygon points="66.2,130.6 68.7,130.0 70.4,132.4 69.6,136.0 67.0,135.4" fill="#92312f" /><polygon points="68.0,139.1 70.9,138.4 72.8,140.4 71.9,143.3 69.0,142.8" fill="#92312f" /><polygon points="61.9,114.9 64.1,114.3 65.6,116.2 64.8,119.1 62.7,118.6" fill="#92312f" /><polygon points="104.2,114.9 106.4,114.3 107.9,116.2 107.1,119.1 105.0,118.6" fill="#92312f" /><polygon points="110.3,119.7 113.2,119.1 115.1,122.0 114.1,126.4 111.2,125.6" fill="#92312f" /><polygon points="105.4,137.8 109.8,137.2 112.7,139.2 111.2,142.1 106.9,141.6" fill="#92312f" /><polygon points="95.8,116.7 97.2,116.1 98.2,117.5 97.7,119.7 96.3,119.4" fill="#92312f" /><polygon points="41.4,131.8 45.0,131.2 47.4,134.1 46.2,138.4 42.6,137.7" fill="#92312f" /><polygon points="54.7,119.7 56.5,119.1 57.7,121.0 57.1,123.9 55.3,123.5" fill="#92312f" /><polygon points="24.5,142.7 26.7,142.1 28.1,144.0 27.4,146.9 25.2,146.4" fill="#92312f" /><polygon points="45.0,141.5 47.2,140.9 48.7,142.8 47.9,145.7 45.8,145.2" fill="#92312f" /><polygon points="53.5,141.5 55.3,140.9 56.5,142.8 55.9,145.7 54.1,145.2" fill="#92312f" /><polygon points="71.6,102.8 73.8,102.2 75.2,103.4 74.5,105.2 72.3,104.9" fill="#92312f" /><polygon points="61.9,106.4 63.8,105.8 65.0,107.3 64.4,109.4 62.6,109.1" fill="#92312f" /><polygon points="47.4,92.5 49.9,93.1 52.5,102.2 51.1,102.8" fill="#e4e6c6" /><polygon points="43.8,108.8 45.6,109.4 46.5,113.7 45.0,113.7" fill="#d6d9b8" /><polygon points="52.5,101.0 55.3,102.2 55.9,109.4 54.1,119.1 52.3,133.6 50.5,133.6 52.3,119.1" fill="#0e1812" /><polygon points="243.6,72.0 279.9,72.0 279.9,142.1 272.6,148.7 267.8,148.7 260.5,143.3 253.3,140.9 248.4,136.0 243.6,133.6 236.4,136.0 231.5,140.9 226.7,146.9 223.1,148.7 217.0,145.7 209.8,148.7 212.2,142.1 218.2,138.4 224.3,133.6 217.0,131.2 207.4,130.0 200.1,132.4 196.5,138.4 192.9,145.7 190.4,142.1 194.1,134.8 188.0,131.2 183.2,133.6 179.6,130.0 180.8,125.2 174.7,121.5 168.7,120.3 163.9,117.9 161.4,113.1 165.1,114.3 171.1,119.1 179.6,121.5 185.6,123.9 192.9,125.2 200.1,121.5 207.4,121.5 214.6,125.2 221.9,123.9 229.1,121.5 236.4,121.5 243.6,120.3 242.4,114.3 240.0,108.2 233.9,104.6 226.7,103.4 219.4,107.0 212.2,111.9 209.8,108.2 202.5,107.0 196.5,105.8 190.4,105.8 188.0,101.0 190.4,96.2 192.9,101.0 200.1,104.6 207.4,105.8 214.6,108.2 221.9,103.4 229.1,102.2 236.4,102.2 241.2,97.4 244.8,91.3 242.4,85.3" fill="#43713a" /><polygon points="145.7,72.0 165.1,72.0 163.9,79.2 161.4,84.1 155.4,85.3 150.6,81.7 146.9,78.0" fill="#43713a" /><polygon points="138.5,82.9 144.5,85.3 149.4,92.5 150.6,97.4 145.7,94.9 138.5,91.3" fill="#43713a" /><polygon points="212.2,81.7 214.6,82.9 219.4,90.1 224.3,94.9 229.1,97.4 226.7,99.2 221.9,96.2 217.0,91.3 213.4,86.5" fill="#43713a" /><polygon points="138.5,123.9 145.7,126.4 151.8,128.8 157.8,126.4 162.7,122.7 163.9,125.2 157.8,130.0 150.6,131.2 143.3,128.8 138.5,127.6" fill="#43713a" /><polygon points="138.5,133.6 144.5,137.2 151.8,136.0 157.8,137.2 160.2,143.3 157.8,145.7 154.2,140.9 146.9,140.9 145.7,145.7 142.1,143.3 138.5,140.9" fill="#43713a" /><polygon points="160.2,90.1 162.7,91.3 162.1,99.8 161.4,108.2 159.6,108.2 159.6,97.4" fill="#43713a" /><polygon points="246.0,36.9 279.9,34.4 279.9,106.9 255.7,94.9 236.4,65.9 233.9,53.8" fill="#8fa274" opacity="0.4" filter="url(#g3)"/><polygon points="244.8,97.4 260.5,94.9 272.6,104.6 267.8,121.5 250.9,123.9 243.6,113.1" fill="#7d8a5c" opacity="0.5" filter="url(#g3)"/><rect width="280" height="148" filter="url(#n3)"/></svg><div class="t cat" style="left:8.4px;top:167.96px;font-size:10.5px;line-height:14px;letter-spacing:-0.08px;">Protected areas</div><svg class="heart" width="18.4" height="16.4" viewBox="0 0 18 16"><path d="M9 14.8 C4.6 11 1.4 8.3 1.4 5.3 C1.4 2.9 3.2 1.2 5.3 1.2 C6.9 1.2 8.3 2.1 9 3.4 C9.7 2.1 11.1 1.2 12.7 1.2 C14.8 1.2 16.6 2.9 16.6 5.3 C16.6 8.3 13.4 11 9 14.8 Z" fill="none" stroke="#5a5a52" stroke-width="1.2" stroke-linejoin="round"/></svg><svg class="keb" width="4" height="11.4" viewBox="0 0 4 11.4"><circle cx="2" cy="1.5" r="1.2" fill="#4a4a44"/><circle cx="2" cy="5.65" r="1.2" fill="#4a4a44"/><circle cx="2" cy="9.8" r="1.2" fill="#4a4a44"/></svg><div class="t ttl" style="left:8.4px;top:191.76px;font-size:13.4px;line-height:18px;letter-spacing:0.041px;">ENG: CRoW Act 2000 - Access La...</div><div class="t new" style="left:8.4px;top:218.74px;font-size:12px;line-height:15px;letter-spacing:-0.198px;">NEW</div><div class="t desc" style="left:8.4px;top:235.74px;font-size:12px;line-height:16px;letter-spacing:0.094px;">Land mapped as access land under CRoW. See</div><div class="t desc" style="left:8.4px;top:252.49px;font-size:12px;line-height:16px;letter-spacing:0.035px;">more <u>here</u>. There are some invalid geometries,...</div></div>
<div class="card" style="left:7.2px;top:284.2px"><svg class="map" viewBox="0 0 280 148" preserveAspectRatio="none"><defs><filter id="n4" x="0" y="0" width="100%" height="100%"><feTurbulence type="fractalNoise" baseFrequency="0.15" numOctaves="3" seed="11"/><feColorMatrix values="0 0 0 0 0  0 0 0 0 0  0 0 0 0 0  0.5 0.5 0 0 -0.5"/></filter><filter id="g4" filterUnits="userSpaceOnUse" x="0" y="0" width="280" height="148"><feGaussianBlur stdDeviation="4"/></filter></defs><rect width="280" height="148" fill="#425d38"/><g filter="url(#g4)"><polygon points="202.3,-0.2 279.7,-0.2 279.7,67.5 236.2,53.0 219.2,50.6 207.2,33.7" fill="#606c46" opacity="0.9"/><polygon points="207.2,86.8 236.2,86.8 260.3,96.5 279.7,115.8 279.7,148.2 199.9,148.2 204.8,115.8" fill="#556b40" opacity="0.9"/><polygon points="-0.2,-0.2 54.9,-0.2 42.8,16.8 28.3,31.2 18.7,40.9 -0.2,43.3" fill="#3c5c33" opacity="0.8"/><polygon points="-0.2,86.8 21.1,84.4 42.8,98.9 45.2,125.5 40.4,148.2 -0.2,148.2" fill="#435a36" opacity="0.8"/></g><polygon points="282.1,10.3 272.7,19.7 272.2,38.3 268.7,62.3 258.1,70.9 242.1,75.1 226.1,77.8 214.1,81.0 227.4,84.2 240.7,88.5 251.4,93.8 259.4,100.2 267.4,105.0 270.6,110.3 275.4,117.0 282.1,118.3" fill="#2f5a50" opacity="0.8"/><polygon points="282.1,17.0 276.5,38.3 273.3,65.0 262.6,74.6 243.4,78.6 228.7,80.7 242.1,85.3 254.1,90.6 262.1,97.3 268.7,101.3 272.7,106.6 282.1,115.1" fill="#0e1b2b" /><polygon points="115.3,50.6 129.8,48.2 135.9,42.1 139.5,53.0 137.1,65.1 149.2,67.5 163.7,74.8 174.5,86.8 170.9,95.3 155.2,98.9 149.2,108.6 139.5,112.2 129.8,115.8 122.6,119.5 108.1,113.4 98.4,107.4 92.4,98.9 91.2,86.8 87.5,76.0 90.0,66.3 98.4,59.0 106.9,54.2" fill="#535c4a" /><path d="M54.9,2.2 L62.2,0.3 L100.8,0.3 L108.1,4.7 L120.2,0.3 L129.8,0.3 L139.5,9.5 L149.2,16.8 L156.4,9.5 L161.2,0.3 L167.3,0.3 L173.3,9.5 L185.4,16.8 L197.5,26.4 L207.2,36.1 L214.4,43.3 L219.2,51.8 L236.2,53.0 L250.7,54.2 L260.3,59.0 L257.9,67.5 L250.7,72.3 L236.2,72.3 L226.5,77.2 L212.0,79.6 L204.8,86.8 L207.2,94.1 L209.6,103.7 L204.8,115.8 L202.3,130.3 L199.9,148.2 L40.4,148.2 L45.2,135.2 L42.8,125.5 L47.7,111.0 L42.8,98.9 L30.8,91.7 L21.1,82.0 L18.7,72.3 L25.9,65.1 L30.8,55.4 L21.1,45.8 L18.7,40.9 L28.3,31.2 L35.6,21.6 L42.8,16.8 L50.1,11.9Z M115.3,50.6 L129.8,48.2 L135.9,42.1 L139.5,53.0 L137.1,65.1 L149.2,67.5 L163.7,74.8 L174.5,86.8 L170.9,95.3 L155.2,98.9 L149.2,108.6 L139.5,112.2 L129.8,115.8 L122.6,119.5 L108.1,113.4 L98.4,107.4 L92.4,98.9 L91.2,86.8 L87.5,76.0 L90.0,66.3 L98.4,59.0 L106.9,54.2Z" fill="#83be46" fill-rule="evenodd"/><polygon points="67.0,9.3 75.7,8.3 81.5,13.7 77.1,19.2 69.9,17.5" fill="#4a6a38" /><polygon points="112.9,12.9 117.3,11.9 120.2,15.5 118.0,19.2 114.4,18.1" fill="#4a6a38" /><polygon points="151.6,20.1 158.8,19.2 163.7,22.8 160.0,26.4 154.0,25.3" fill="#4a6a38" /><polygon points="33.2,51.5 40.4,50.6 45.2,54.2 41.6,57.8 35.6,56.7" fill="#4a6a38" /><polygon points="197.5,64.8 206.2,63.9 212.0,66.3 207.6,68.7 200.4,68.0" fill="#4a6a38" /><polygon points="74.2,22.5 80.0,21.6 83.9,25.2 81.0,28.8 76.2,27.7" fill="#4a6a38" /><polygon points="96.0,22.5 98.9,21.6 100.8,24.6 99.4,27.6 97.0,26.7" fill="#4a6a38" /><polygon points="57.3,133.7 64.6,132.8 69.4,137.6 65.8,142.4 59.8,141.0" fill="#4a6a38" /><polygon points="163.7,131.3 169.5,130.3 173.3,133.0 170.4,135.6 165.6,134.9" fill="#4a6a38" /><polygon points="149.2,104.7 155.0,103.7 158.8,108.6 155.9,113.4 151.1,112.0" fill="#4a6a38" /><polygon points="38.0,75.7 42.3,74.8 45.2,77.8 43.1,80.8 39.4,79.9" fill="#4a6a38" /><polygon points="52.5,55.2 55.4,54.2 57.3,57.2 55.9,60.2 53.5,59.3" fill="#4a6a38" /><polygon points="63.4,60.0 66.0,59.0 67.7,62.7 66.4,66.3 64.2,65.2" fill="#4a6a38" /><polygon points="83.9,40.7 87.5,39.7 90.0,43.3 88.1,47.0 85.1,45.9" fill="#4a6a38" /><polygon points="100.8,34.6 104.5,33.7 106.9,36.1 105.1,38.5 102.0,37.8" fill="#4a6a38" /><polygon points="137.1,22.5 139.3,21.6 140.7,31.2 139.6,40.9 137.8,38.0" fill="#4a6a38" /><polygon points="168.5,58.8 172.1,57.8 174.5,60.2 172.7,62.7 169.7,61.9" fill="#4a6a38" /><polygon points="187.8,52.8 191.5,51.8 193.9,54.0 192.1,56.1 189.0,55.5" fill="#4a6a38" /><polygon points="199.9,51.5 202.8,50.6 204.8,53.0 203.3,55.4 200.9,54.7" fill="#4a6a38" /><polygon points="214.4,56.4 216.6,55.4 218.0,57.6 217.0,59.8 215.1,59.1" fill="#4a6a38" /><polygon points="74.2,104.7 78.6,103.7 81.5,106.2 79.3,108.6 75.7,107.9" fill="#4a6a38" /><polygon points="62.2,116.8 70.9,115.8 76.7,118.2 72.3,120.7 65.1,119.9" fill="#4a6a38" /><polygon points="91.2,126.5 97.0,125.5 100.8,127.7 97.9,129.8 93.1,129.2" fill="#4a6a38" /><polygon points="110.5,138.5 116.3,137.6 120.2,140.0 117.3,142.4 112.4,141.7" fill="#4a6a38" /><polygon points="192.7,89.0 195.6,88.0 197.5,92.9 196.0,97.7 193.6,96.3" fill="#4a6a38" /><polygon points="50.1,80.5 55.9,79.6 59.8,81.4 56.8,83.2 52.0,82.7" fill="#4a6a38" /><polygon points="120.2,39.5 124.5,38.5 127.4,40.9 125.2,43.3 121.6,42.6" fill="#4a6a38" /><polygon points="178.2,92.6 185.4,91.7 190.2,94.1 186.6,96.5 180.6,95.8" fill="#4a6a38" /><rect width="280" height="148" filter="url(#n4)"/></svg><div class="added"></div><div class="t addt" style="left:127.9px;top:75.25px;font-size:14px;line-height:16px;letter-spacing:-0.221px;">Added</div><div class="t cat" style="left:8.4px;top:167.96px;font-size:10.5px;line-height:14px;letter-spacing:-0.024px;">England &bull; Protected areas</div><svg class="heart" width="18.4" height="16.4" viewBox="0 0 18 16"><path d="M9 14.8 C4.6 11 1.4 8.3 1.4 5.3 C1.4 2.9 3.2 1.2 5.3 1.2 C6.9 1.2 8.3 2.1 9 3.4 C9.7 2.1 11.1 1.2 12.7 1.2 C14.8 1.2 16.6 2.9 16.6 5.3 C16.6 8.3 13.4 11 9 14.8 Z" fill="none" stroke="#5a5a52" stroke-width="1.2" stroke-linejoin="round"/></svg><svg class="keb" width="4" height="11.4" viewBox="0 0 4 11.4"><circle cx="2" cy="1.5" r="1.2" fill="#4a4a44"/><circle cx="2" cy="5.65" r="1.2" fill="#4a4a44"/><circle cx="2" cy="9.8" r="1.2" fill="#4a4a44"/></svg><div class="t ttl" style="left:8.4px;top:191.76px;font-size:13.4px;line-height:18px;letter-spacing:0.195px;">ENG: Greenbelt</div><div class="t new" style="left:8.4px;top:218.74px;font-size:12px;line-height:15px;letter-spacing:-0.198px;">NEW</div></div>
<div class="card" style="left:321.0px;top:284.2px"><svg class="map" viewBox="0 0 280 148" preserveAspectRatio="none"><defs><filter id="n5" x="0" y="0" width="100%" height="100%"><feTurbulence type="fractalNoise" baseFrequency="0.15" numOctaves="3" seed="8"/><feColorMatrix values="0 0 0 0 0  0 0 0 0 0  0 0 0 0 0  0.5 0.5 0 0 -0.5"/></filter><filter id="b5" x="-5%" y="-5%" width="110%" height="110%"><feGaussianBlur stdDeviation="3"/></filter></defs><rect width="280" height="148" fill="#577143"/><g filter="url(#b5)"><polygon points="67.0,16.8 96.0,11.9 129.8,9.5 163.7,7.1 192.7,4.7 216.8,9.5 212.0,28.8 202.3,43.3 183.0,55.4 163.7,65.1 139.5,67.5 115.3,65.1 98.4,55.4 74.2,43.3" fill="#62703f" /><polygon points="187.8,0.3 221.7,0.3 219.2,14.3 202.3,21.6 187.8,14.3" fill="#66703f" /><polygon points="-0.2,0.3 33.2,0.3 38.0,24.0 23.5,48.2 -0.2,53.0" fill="#3a5a30" /><polygon points="-0.2,91.7 42.8,96.5 96.0,120.7 120.2,148.2 -0.2,148.2" fill="#3f5c31" /></g><polygon points="9.0,74.8 28.3,73.5 42.8,79.6 40.4,91.7 21.1,94.1 7.8,86.8" fill="#223d22" opacity="0.85"/><polygon points="50.1,82.0 63.4,80.8 65.8,91.7 54.9,95.3 48.9,90.5" fill="#223d22" opacity="0.85"/><polygon points="79.1,134.0 98.4,130.3 115.3,135.2 114.1,144.8 86.3,146.0" fill="#223d22" opacity="0.85"/><polygon points="149.2,120.7 162.5,119.5 163.7,129.1 151.6,130.3" fill="#223d22" opacity="0.85"/><polygon points="1.7,28.8 21.1,31.2 19.9,40.9 4.2,39.7" fill="#223d22" opacity="0.85"/><polygon points="216.3,25.2 224.1,25.9 223.6,31.2 216.8,30.8" fill="#223d22" opacity="0.85"/><polygon points="163.7,22.8 174.5,20.4 175.8,28.8 164.9,31.2" fill="#223d22" opacity="0.85"/><polygon points="33.2,55.4 40.4,54.2 42.8,62.7 34.4,63.9" fill="#223d22" opacity="0.85"/><polygon points="207.2,130.3 219.2,129.1 220.5,140.0 208.4,140.0" fill="#223d22" opacity="0.85"/><polygon points="96.0,98.9 108.1,101.3 120.2,113.4 110.5,115.8 98.4,108.6" fill="#223d22" opacity="0.85"/><polygon points="180.1,109.3 176.8,113.2 173.0,112.2 168.4,111.3 168.5,106.5 170.8,105.6 178.0,106.2" fill="#2a4627" opacity="0.67"/><polygon points="218.1,25.1 214.6,26.7 209.6,27.6 208.3,26.3 207.4,24.6 212.7,23.0 216.5,22.9" fill="#2a4627" opacity="0.69"/><polygon points="251.9,44.9 248.5,47.5 243.9,46.5 244.2,44.5 248.9,42.9" fill="#2a4627" opacity="0.54"/><polygon points="198.7,9.2 197.4,13.6 195.4,13.2 192.8,11.3 194.0,7.3 198.1,7.2" fill="#31502b" opacity="0.55"/><polygon points="251.4,38.9 248.7,40.9 245.6,41.5 243.3,37.6 246.4,35.1 249.5,35.6" fill="#2a4627" opacity="0.64"/><polygon points="179.3,104.9 176.8,108.2 174.2,109.1 170.6,106.7 171.5,105.0 174.5,103.6 177.4,103.2" fill="#2a4627" opacity="0.69"/><polygon points="162.4,20.8 159.9,23.0 153.2,23.1 152.8,20.7 154.5,19.2 159.2,19.6" fill="#31502b" opacity="0.67"/><polygon points="37.1,120.9 35.4,122.4 30.0,122.3 26.9,121.1 29.6,118.6 33.9,118.5" fill="#27402a" opacity="0.61"/><polygon points="84.9,73.0 84.2,75.2 75.5,75.6 73.4,72.4 75.2,69.3 82.7,69.4" fill="#31502b" opacity="0.59"/><polygon points="209.0,121.2 207.5,123.7 203.2,124.3 200.7,123.7 201.8,120.4 204.5,117.6 208.5,117.8" fill="#27402a" opacity="0.60"/><polygon points="123.0,92.8 121.7,94.9 117.4,95.8 111.9,94.2 111.7,89.1 114.5,88.2 121.1,88.1" fill="#31502b" opacity="0.46"/><polygon points="16.4,68.5 14.4,71.4 9.1,72.6 6.8,70.0 6.7,67.3 10.8,66.2 13.9,66.3" fill="#27402a" opacity="0.49"/><polygon points="163.1,79.8 158.4,81.9 154.6,82.0 153.3,80.2 154.7,77.7 158.7,77.5" fill="#27402a" opacity="0.51"/><polygon points="278.1,57.1 274.4,59.4 270.2,61.9 261.9,59.5 264.1,56.1 268.5,51.8 272.5,54.1" fill="#2a4627" opacity="0.65"/><polygon points="8.8,78.3 7.8,83.3 2.4,81.8 2.0,76.2 7.0,74.5" fill="#2a4627" opacity="0.40"/><polygon points="42.5,42.9 41.2,45.6 35.2,45.3 31.5,44.7 30.8,40.3 35.6,40.4 40.9,40.7" fill="#27402a" opacity="0.61"/><polygon points="272.6,95.3 268.4,98.2 260.8,97.9 256.9,94.7 261.0,92.6 269.7,91.9" fill="#2a4627" opacity="0.45"/><polygon points="202.0,130.2 197.9,132.0 187.6,132.8 187.5,129.8 189.7,126.4 199.4,127.7" fill="#2a4627" opacity="0.44"/><polygon points="42.6,91.3 37.4,92.2 30.1,92.3 30.0,90.0 38.0,88.6" fill="#27402a" opacity="0.42"/><polygon points="22.5,84.0 18.9,88.9 12.4,87.8 14.3,82.4 18.9,80.9" fill="#27402a" opacity="0.55"/><polygon points="259.2,81.6 257.7,84.1 249.9,84.7 247.8,83.1 248.3,81.6 250.7,79.7 255.2,79.4" fill="#27402a" opacity="0.58"/><polygon points="72.8,127.5 70.8,129.6 64.9,130.8 64.2,129.5 63.5,126.5 67.3,126.2 70.6,126.6" fill="#2a4627" opacity="0.49"/><polygon points="265.1,104.2 261.1,106.0 255.3,106.2 251.7,104.8 252.9,102.2 255.8,101.8 260.5,101.8" fill="#31502b" opacity="0.60"/><polygon points="262.6,134.3 260.7,137.4 256.1,135.7 256.0,133.6 259.6,132.2" fill="#2a4627" opacity="0.41"/><polygon points="255.6,52.1 251.2,54.7 244.1,53.9 242.6,50.4 251.0,49.8" fill="#2a4627" opacity="0.61"/><polygon points="165.2,96.3 163.3,99.5 157.8,100.9 156.1,98.8 154.2,94.0 159.3,92.7 163.6,94.9" fill="#2a4627" opacity="0.54"/><polygon points="228.8,118.9 236.5,121.0 235.1,126.4 227.4,124.3" fill="#b3a57e" opacity="0.81"/><polygon points="134.5,136.6 138.1,134.4 139.7,137.0 136.0,139.2" fill="#9c8d68" opacity="0.77"/><polygon points="12.7,118.5 19.1,121.6 17.2,125.7 10.8,122.6" fill="#b3a57e" opacity="0.56"/><polygon points="24.0,44.4 28.0,46.7 26.0,50.3 22.0,48.1" fill="#a79a72" opacity="0.80"/><polygon points="57.1,2.5 64.9,3.1 64.5,7.0 56.8,6.4" fill="#9c8d68" opacity="0.68"/><polygon points="35.2,-0.2 43.5,4.1 41.4,8.2 33.1,4.0" fill="#b3a57e" opacity="0.69"/><polygon points="35.1,70.7 44.5,69.6 44.9,72.7 35.4,73.8" fill="#b3a57e" opacity="0.55"/><polygon points="22.3,35.4 26.7,35.8 26.4,39.5 21.9,39.1" fill="#b3a57e" opacity="0.60"/><polygon points="216.6,126.4 226.4,129.6 225.6,132.0 215.8,128.7" fill="#9c8d68" opacity="0.76"/><polygon points="150.9,128.3 159.5,129.0 159.0,133.9 150.4,133.2" fill="#9c8d68" opacity="0.55"/><polygon points="189.1,113.6 193.1,113.3 193.3,115.6 189.3,115.9" fill="#a79a72" opacity="0.78"/><polygon points="43.8,40.8 51.4,36.4 53.0,39.2 45.4,43.6" fill="#a79a72" opacity="0.51"/><polygon points="14.3,17.0 19.8,20.3 17.1,24.9 11.6,21.6" fill="#a79a72" opacity="0.58"/><polygon points="-0.3,86.5 8.4,81.9 10.7,86.1 1.9,90.7" fill="#b3a57e" opacity="0.72"/><polygon points="37.6,111.1 44.5,109.7 45.2,113.3 38.4,114.7" fill="#9c8d68" opacity="0.82"/><polygon points="209.7,133.6 217.4,134.5 216.7,140.2 209.0,139.3" fill="#a79a72" opacity="0.54"/><polygon points="234.2,98.6 238.9,101.1 237.9,103.0 233.2,100.5" fill="#b3a57e" opacity="0.67"/><polygon points="241.6,58.2 246.7,56.3 247.8,59.3 242.7,61.2" fill="#8f8a60" opacity="0.77"/><polygon points="213.8,51.5 223.4,53.4 222.4,58.4 212.8,56.5" fill="#a79a72" opacity="0.72"/><polygon points="108.3,23.2 115.2,20.3 116.1,22.5 109.2,25.3" fill="#a79a72" opacity="0.76"/><polygon points="74.4,132.3 84.0,132.1 84.2,137.0 74.5,137.3" fill="#9c8d68" opacity="0.80"/><polygon points="170.1,116.2 176.7,116.3 176.7,118.5 170.1,118.4" fill="#b3a57e" opacity="0.78"/><polygon points="3.7,97.7 12.0,97.7 12.0,101.8 3.7,101.7" fill="#9c8d68" opacity="0.66"/><polygon points="213.1,86.4 222.3,81.1 224.4,84.7 215.2,90.0" fill="#b3a57e" opacity="0.78"/><polygon points="96.9,86.8 105.4,84.5 106.5,88.4 98.0,90.7" fill="#a79a72" opacity="0.51"/><polygon points="209.6,87.8 219.7,86.8 220.2,92.3 210.2,93.4" fill="#a79a72" opacity="0.60"/><polygon points="182.5,135.7 192.0,139.7 190.2,144.0 180.6,139.9" fill="#b3a57e" opacity="0.67"/><polygon points="23.7,17.4 30.0,16.9 30.5,21.9 24.1,22.4" fill="#a79a72" opacity="0.73"/><polygon points="102.4,108.0 110.0,109.6 109.3,112.5 101.8,110.8" fill="#8f8a60" opacity="0.64"/><polygon points="27.5,99.5 35.3,98.3 36.0,103.1 28.2,104.2" fill="#a79a72" opacity="0.57"/><polygon points="244.1,25.4 252.1,22.6 253.7,27.3 245.8,30.0" fill="#a79a72" opacity="0.70"/><polygon points="170.1,93.8 177.5,91.3 178.6,94.8 171.2,97.2" fill="#9c8d68" opacity="0.69"/><polygon points="249.7,42.3 254.7,45.4 252.3,49.1 247.3,46.0" fill="#b3a57e" opacity="0.65"/><polygon points="38.7,43.0 46.6,42.3 46.9,46.6 39.1,47.2" fill="#8f8a60" opacity="0.71"/><polygon points="175.2,100.4 184.4,100.2 184.4,102.6 175.3,102.8" fill="#a79a72" opacity="0.61"/><polygon points="231.2,92.3 241.5,94.8 240.8,97.7 230.5,95.2" fill="#9c8d68" opacity="0.79"/><polygon points="-0.4,97.6 4.2,96.9 4.8,100.2 0.1,101.0" fill="#a79a72" opacity="0.70"/><polygon points="49.5,127.1 56.6,130.5 54.8,134.4 47.7,131.0" fill="#a79a72" opacity="0.63"/><polygon points="223.9,27.7 229.5,30.5 228.2,33.0 222.7,30.2" fill="#a79a72" opacity="0.59"/><polygon points="261.0,65.8 264.3,67.9 261.3,72.7 257.9,70.7" fill="#b3a57e" opacity="0.74"/><polygon points="133.5,137.9 143.7,141.2 143.0,143.5 132.8,140.2" fill="#8f8a60" opacity="0.51"/><polygon points="219.9,145.4 229.1,143.6 229.6,146.5 220.5,148.2" fill="#b3a57e" opacity="0.60"/><polygon points="134.0,101.5 143.3,99.2 144.3,103.4 135.0,105.7" fill="#8f8a60" opacity="0.83"/><polygon points="15.8,62.4 21.0,60.9 22.6,66.4 17.3,67.9" fill="#a79a72" opacity="0.55"/><polygon points="265.6,79.1 272.1,81.9 270.9,84.5 264.5,81.7" fill="#b3a57e" opacity="0.53"/><polygon points="97.4,116.7 101.3,116.1 102.1,121.0 98.3,121.6" fill="#a79a72" opacity="0.51"/><polygon points="153.0,136.1 161.6,141.5 160.3,143.6 151.7,138.1" fill="#b3a57e" opacity="0.84"/><polygon points="122.6,67.6 126.4,69.9 124.8,72.6 121.0,70.3" fill="#9c8d68" opacity="0.68"/><polygon points="11.8,56.3 21.3,57.4 20.9,61.1 11.4,60.1" fill="#a79a72" opacity="0.58"/><polygon points="112.8,104.1 122.6,103.3 123.0,108.4 113.3,109.2" fill="#9c8d68" opacity="0.51"/><polygon points="222.9,25.8 228.8,23.5 230.0,26.6 224.1,28.9" fill="#a79a72" opacity="0.85"/><polygon points="58.1,61.7 63.8,60.2 64.8,64.0 59.1,65.5" fill="#a79a72" opacity="0.77"/><polygon points="9.9,58.3 14.7,59.7 13.4,64.0 8.6,62.6" fill="#9c8d68" opacity="0.84"/><polygon points="253.1,135.8 257.2,135.5 257.4,138.3 253.3,138.7" fill="#8f8a60" opacity="0.55"/><polygon points="77.2,130.4 87.1,127.8 88.2,131.8 78.2,134.5" fill="#a79a72" opacity="0.73"/><polygon points="158.7,139.9 164.1,138.3 165.3,142.4 159.9,144.0" fill="#a79a72" opacity="0.76"/><polygon points="34.7,69.0 43.2,71.8 42.5,73.9 33.9,71.0" fill="#9c8d68" opacity="0.58"/><polygon points="220.0,32.6 228.4,35.5 226.7,40.5 218.3,37.6" fill="#8f8a60" opacity="0.65"/><polygon points="24.4,19.3 34.5,16.6 35.6,20.7 25.5,23.4" fill="#9c8d68" opacity="0.85"/><polygon points="83.3,23.8 87.5,25.0 86.5,28.7 82.2,27.4" fill="#9c8d68" opacity="0.53"/><polygon points="139.8,118.1 146.4,117.8 146.6,121.4 140.0,121.8" fill="#a79a72" opacity="0.67"/><polygon points="16.3,12.1 21.6,15.4 20.2,17.7 14.8,14.3" fill="#8f8a60" opacity="0.79"/><polygon points="68.8,3.5 74.1,5.5 73.2,8.1 67.8,6.2" fill="#8f8a60" opacity="0.71"/><polygon points="238.1,131.3 248.0,132.1 247.7,136.4 237.8,135.6" fill="#8f8a60" opacity="0.70"/><polygon points="0.8,4.6 9.7,8.8 8.0,12.4 -0.9,8.1" fill="#a79a72" opacity="0.51"/><polygon points="120.5,82.0 128.1,83.9 126.9,88.5 119.4,86.6" fill="#a79a72" opacity="0.51"/><polygon points="145.0,122.1 155.4,119.2 156.7,123.7 146.2,126.6" fill="#9c8d68" opacity="0.76"/><polygon points="205.1,76.7 214.6,72.6 216.2,76.1 206.6,80.3" fill="#b3a57e" opacity="0.83"/><polygon points="86.2,87.1 92.2,91.1 90.7,93.3 84.7,89.3" fill="#9c8d68" opacity="0.65"/><polygon points="249.7,24.6 257.0,23.2 258.1,28.7 250.7,30.1" fill="#a79a72" opacity="0.55"/><polygon points="71.9,70.3 79.6,70.8 79.2,76.2 71.5,75.7" fill="#b3a57e" opacity="0.65"/><polygon points="214.6,122.1 220.3,120.4 221.1,122.8 215.3,124.5" fill="#8f8a60" opacity="0.80"/><polygon points="140.2,69.4 148.6,72.7 147.7,75.0 139.3,71.7" fill="#a79a72" opacity="0.62"/><polygon points="24.7,93.9 33.3,88.7 35.5,92.4 26.9,97.5" fill="#9c8d68" opacity="0.56"/><polygon points="93.1,109.0 97.2,111.0 94.8,115.8 90.7,113.7" fill="#8f8a60" opacity="0.52"/><polygon points="196.6,60.6 200.6,59.0 201.9,62.0 197.9,63.6" fill="#a79a72" opacity="0.78"/><polygon points="245.9,74.1 250.3,72.6 251.5,76.1 247.1,77.6" fill="#a79a72" opacity="0.83"/><polygon points="146.2,95.0 154.9,93.6 155.5,96.9 146.8,98.3" fill="#a79a72" opacity="0.66"/><polygon points="27.0,112.1 31.1,109.8 33.1,113.5 29.0,115.7" fill="#9c8d68" opacity="0.65"/><polygon points="71.0,81.6 81.2,77.9 82.5,81.4 72.2,85.1" fill="#b3a57e" opacity="0.63"/><polygon points="173.4,131.7 179.6,131.9 179.4,137.0 173.2,136.8" fill="#b3a57e" opacity="0.61"/><polygon points="235.5,91.4 241.2,93.6 239.7,97.5 234.0,95.3" fill="#8f8a60" opacity="0.60"/><polygon points="208.7,87.2 213.4,88.4 212.7,91.2 208.0,90.1" fill="#a79a72" opacity="0.66"/><polygon points="61.4,37.1 69.6,34.6 71.0,39.2 62.8,41.7" fill="#9c8d68" opacity="0.80"/><polygon points="43.9,101.4 48.3,100.0 49.5,104.1 45.1,105.4" fill="#8f8a60" opacity="0.74"/><polygon points="148.6,80.7 154.0,81.2 153.8,83.5 148.4,83.0" fill="#9c8d68" opacity="0.72"/><polygon points="130.9,127.4 141.2,125.3 141.9,128.4 131.5,130.5" fill="#8f8a60" opacity="0.55"/><polygon points="115.9,59.0 120.5,60.4 119.1,64.8 114.5,63.3" fill="#a79a72" opacity="0.50"/><polygon points="256.5,45.4 266.5,44.4 266.9,49.0 256.9,49.9" fill="#9c8d68" opacity="0.62"/><polygon points="199.9,71.3 208.4,74.4 206.8,78.5 198.4,75.4" fill="#b3a57e" opacity="0.70"/><polygon points="177.4,78.4 184.7,77.3 185.3,81.1 178.0,82.2" fill="#b3a57e" opacity="0.69"/><polygon points="267.9,121.8 273.4,122.8 272.5,127.9 267.0,126.9" fill="#9c8d68" opacity="0.65"/><polygon points="234.2,95.3 244.2,92.1 245.1,94.8 235.1,98.1" fill="#a79a72" opacity="0.76"/><polygon points="205.9,66.3 214.4,63.8 215.1,66.1 206.6,68.6" fill="#a79a72" opacity="0.55"/><polygon points="12.6,3.3 22.0,2.8 22.2,5.4 12.8,5.8" fill="#9c8d68" opacity="0.81"/><polygon points="209.8,100.3 218.1,101.4 217.5,105.3 209.3,104.1" fill="#b3a57e" opacity="0.51"/><polygon points="242.6,143.9 247.8,142.8 248.3,145.2 243.0,146.2" fill="#a79a72" opacity="0.69"/><polygon points="242.8,27.7 248.6,24.3 249.8,26.3 244.0,29.7" fill="#b3a57e" opacity="0.76"/><polygon points="103.2,25.6 113.0,22.2 114.5,26.6 104.7,30.1" fill="#9c8d68" opacity="0.82"/><polygon points="38.9,139.5 44.4,137.5 45.8,141.3 40.3,143.4" fill="#8f8a60" opacity="0.77"/><polygon points="237.3,131.4 246.7,133.2 246.0,136.9 236.6,135.0" fill="#9c8d68" opacity="0.76"/><polygon points="52.3,86.0 60.1,81.3 62.8,85.9 55.1,90.6" fill="#b3a57e" opacity="0.63"/><polygon points="24.4,88.8 30.6,87.2 31.3,89.8 25.0,91.5" fill="#a79a72" opacity="0.69"/><polygon points="191.4,136.4 200.6,136.0 200.8,140.8 191.6,141.1" fill="#8f8a60" opacity="0.75"/><polygon points="243.3,68.7 249.6,70.5 248.1,76.0 241.8,74.3" fill="#8f8a60" opacity="0.76"/><polygon points="130.2,114.6 137.2,115.5 136.5,121.0 129.5,120.0" fill="#9c8d68" opacity="0.56"/><polygon points="114.1,65.3 123.7,62.9 124.4,65.8 114.9,68.2" fill="#a79a72" opacity="0.77"/><polygon points="45.2,50.8 54.6,52.2 54.2,54.5 44.9,53.1" fill="#a79a72" opacity="0.82"/><polygon points="241.5,112.6 250.4,107.7 252.6,111.8 243.7,116.7" fill="#9c8d68" opacity="0.68"/><polygon points="128.5,64.5 133.5,64.2 133.7,67.4 128.7,67.7" fill="#a79a72" opacity="0.84"/><polygon points="138.7,129.5 147.3,124.6 149.5,128.4 140.8,133.2" fill="#9c8d68" opacity="0.60"/><polygon points="22.7,51.8 33.2,49.7 33.7,52.2 23.2,54.2" fill="#b3a57e" opacity="0.62"/><polygon points="25.1,49.9 33.5,44.7 35.6,48.1 27.2,53.3" fill="#9c8d68" opacity="0.75"/><polygon points="252.9,86.4 263.2,85.9 263.4,89.2 253.1,89.7" fill="#8f8a60" opacity="0.68"/><polygon points="22.1,75.8 31.7,72.1 33.0,75.5 23.4,79.2" fill="#9c8d68" opacity="0.83"/><polygon points="33.4,9.2 39.2,11.3 38.4,13.5 32.6,11.4" fill="#9c8d68" opacity="0.71"/><polygon points="203.0,4.9 207.2,7.1 204.9,11.5 200.7,9.3" fill="#a79a72" opacity="0.82"/><polygon points="62.7,62.1 68.7,62.3 68.6,67.0 62.6,66.8" fill="#9c8d68" opacity="0.79"/><polygon points="169.5,122.8 174.5,121.7 175.3,125.5 170.3,126.6" fill="#a79a72" opacity="0.54"/><polygon points="242.9,50.7 251.2,55.5 248.4,60.3 240.1,55.5" fill="#9c8d68" opacity="0.64"/><polygon points="220.3,77.3 225.7,80.8 224.2,83.2 218.8,79.6" fill="#a79a72" opacity="0.83"/><polygon points="118.4,91.0 124.4,87.2 126.1,89.9 120.1,93.7" fill="#b3a57e" opacity="0.73"/><polygon points="66.2,70.4 73.4,74.1 71.5,77.7 64.4,74.0" fill="#8f8a60" opacity="0.53"/><polygon points="92.1,52.1 95.5,50.0 97.0,52.4 93.6,54.5" fill="#9c8d68" opacity="0.68"/><polygon points="8.3,33.9 18.7,30.3 20.4,35.1 9.9,38.7" fill="#9c8d68" opacity="0.51"/><polygon points="191.1,110.3 195.3,108.3 197.4,112.5 193.2,114.5" fill="#a79a72" opacity="0.72"/><polygon points="210.0,129.0 218.0,127.5 219.0,133.0 211.0,134.4" fill="#8f8a60" opacity="0.59"/><polygon points="46.6,39.1 50.8,40.3 50.1,43.0 45.9,41.9" fill="#9c8d68" opacity="0.79"/><polygon points="210.8,67.9 216.1,69.5 215.4,71.8 210.1,70.1" fill="#b3a57e" opacity="0.63"/><polygon points="70.7,67.6 75.3,66.2 76.0,68.5 71.5,69.9" fill="#8f8a60" opacity="0.58"/><polygon points="167.8,-0.0 175.4,4.5 174.3,6.4 166.6,1.9" fill="#9c8d68" opacity="0.62"/><polygon points="72.0,30.5 79.9,32.3 79.1,36.0 71.2,34.2" fill="#b3a57e" opacity="0.58"/><polygon points="0.9,43.7 6.3,44.8 5.7,47.7 0.3,46.6" fill="#b3a57e" opacity="0.60"/><polygon points="201.3,29.3 205.9,30.4 204.8,34.6 200.2,33.5" fill="#9c8d68" opacity="0.58"/><polygon points="161.9,83.8 171.4,85.9 170.4,90.3 161.0,88.3" fill="#8f8a60" opacity="0.70"/><polygon points="259.8,144.6 263.5,143.0 264.3,145.1 260.7,146.6" fill="#b3a57e" opacity="0.73"/><polygon points="165.1,92.9 169.9,93.2 169.6,97.0 164.8,96.7" fill="#b3a57e" opacity="0.76"/><polygon points="33.2,3.5 42.8,2.2 46.5,9.5 38.0,13.1 33.2,9.5" fill="#9a9d96" opacity="0.6"/><polygon points="38.0,67.5 57.3,65.1 67.0,68.7 57.3,72.3 40.4,72.8" fill="#8d918a" opacity="0.5"/><polygon points="273.6,70.4 279.7,70.4 279.7,75.2 274.3,75.2" fill="#e8e8e4" /><polygon points="256.7,67.5 265.2,66.3 266.4,71.8 257.9,72.8" fill="#c9c9c2" opacity="0.7"/><polygon points="220.5,7.1 226.5,2.2 236.2,0.3 245.8,2.2 250.7,8.3 255.5,10.7 251.9,16.8 248.2,21.6 238.6,19.2 231.3,19.2 224.1,15.5" fill="#7a50cf" /><polygon points="207.2,38.5 212.0,33.2 218.0,36.1 222.9,40.9 225.3,44.5 219.2,47.7 212.0,48.6 207.6,45.8" fill="#7a50cf" /><polygon points="148.0,44.5 154.0,40.9 158.8,39.0 164.9,39.7 165.6,43.3 162.5,49.4 157.6,48.2 152.8,46.2" fill="#7a50cf" /><polygon points="152.8,33.7 156.9,30.8 157.6,34.9 154.0,37.3" fill="#7a50cf" /><polygon points="122.6,71.1 126.2,69.4 133.5,69.9 132.7,74.3 126.2,74.8 123.8,77.2" fill="#7a50cf" /><polygon points="181.1,68.7 186.6,69.9 189.0,73.5 185.4,77.6 181.3,76.7" fill="#7a50cf" /><polygon points="126.7,84.9 132.2,84.4 131.8,88.8 126.9,89.2" fill="#7a50cf" /><polygon points="185.4,97.7 191.5,96.0 193.9,100.1 190.2,102.5 185.9,101.3" fill="#7a50cf" /><polygon points="184.2,105.0 187.8,105.0 189.0,108.1 185.4,109.1" fill="#7a50cf" /><polygon points="71.3,57.8 74.2,53.0 75.5,60.2 77.9,63.9 73.0,65.6 70.6,62.7" fill="#7a50cf" /><polygon points="81.5,71.1 86.3,72.3 85.8,77.2 82.0,76.0" fill="#7a50cf" /><polygon points="21.6,67.5 25.9,68.7 24.7,71.8 21.6,71.1" fill="#7a50cf" /><polygon points="154.0,140.0 158.8,138.1 161.7,141.2 161.2,148.2 154.5,148.2" fill="#7a50cf" /><polygon points="248.2,84.9 270.0,83.2 270.5,84.9 249.5,86.8" fill="#7a50cf" /><polygon points="245.8,106.2 250.7,103.7 252.6,108.1 247.8,109.5" fill="#7a50cf" /><polygon points="272.4,121.9 277.2,122.6 277.7,126.7 272.9,126.0" fill="#7a50cf" /><polygon points="127.4,140.0 134.7,140.7 135.9,143.6 129.8,142.9" fill="#7a50cf" /><polygon points="23.5,141.2 27.1,140.0 27.8,143.6 24.0,144.3" fill="#7a50cf" /><polygon points="71.8,11.9 77.9,10.7 77.4,13.8 72.3,14.3" fill="#7a50cf" /><polygon points="32.0,9.5 35.6,10.7 35.1,13.8 32.4,12.4" fill="#7a50cf" /><polygon points="196.3,148.2 202.3,144.8 212.0,145.3 213.2,148.2" fill="#7a50cf" /><polygon points="90.0,79.6 94.8,80.1 94.1,83.2 90.2,82.5" fill="#7a50cf" /><polygon points="254.3,112.2 257.9,113.4 257.4,117.0 254.0,115.8" fill="#7a50cf" /><polygon points="276.0,92.9 279.7,92.9 279.7,98.9 276.8,98.4" fill="#7a50cf" /><polygon points="93.6,10.7 96.5,11.4 96.0,15.5 93.6,14.3" fill="#7a50cf" /><polygon points="116.5,30.0 120.2,29.6 120.2,32.5 116.8,32.5" fill="#7a50cf" /><polygon points="16.7,119.5 20.1,119.9 19.9,122.4 16.7,121.9" fill="#7a50cf" /><polygon points="264.0,119.5 267.6,118.7 267.6,121.6 264.2,121.6" fill="#7a50cf" /><rect width="280" height="148" filter="url(#n5)"/></svg><div class="t cat" style="left:8.4px;top:167.96px;font-size:10.5px;line-height:14px;letter-spacing:-0.08px;">Protected areas</div><svg class="heart" width="18.4" height="16.4" viewBox="0 0 18 16"><path d="M9 14.8 C4.6 11 1.4 8.3 1.4 5.3 C1.4 2.9 3.2 1.2 5.3 1.2 C6.9 1.2 8.3 2.1 9 3.4 C9.7 2.1 11.1 1.2 12.7 1.2 C14.8 1.2 16.6 2.9 16.6 5.3 C16.6 8.3 13.4 11 9 14.8 Z" fill="none" stroke="#5a5a52" stroke-width="1.2" stroke-linejoin="round"/></svg><svg class="keb" width="4" height="11.4" viewBox="0 0 4 11.4"><circle cx="2" cy="1.5" r="1.2" fill="#4a4a44"/><circle cx="2" cy="5.65" r="1.2" fill="#4a4a44"/><circle cx="2" cy="9.8" r="1.2" fill="#4a4a44"/></svg><div class="t ttl" style="left:8.4px;top:191.76px;font-size:13.4px;line-height:18px;letter-spacing:0.26px;">ENG: Scheduled Monuments</div><div class="t new" style="left:8.4px;top:218.74px;font-size:12px;line-height:15px;letter-spacing:-0.198px;">NEW</div></div>
<div class="card" style="left:634.8px;top:284.2px"><svg class="map" viewBox="0 0 280 148" preserveAspectRatio="none"><defs><filter id="b6" filterUnits="userSpaceOnUse" x="0" y="0" width="280" height="148"><feGaussianBlur stdDeviation="4"/></filter><filter id="r6" filterUnits="userSpaceOnUse" x="0" y="0" width="280" height="148"><feGaussianBlur in="SourceGraphic" stdDeviation="5" result="b"/><feTurbulence type="fractalNoise" baseFrequency="0.12" numOctaves="3" seed="6" result="t"/><feColorMatrix in="t" values="0 0 0 0 0.33  0 0 0 0 0.52  0 0 0 0 0.3  1.6 1.6 0 0 -1.25" result="sp"/><feComposite in="sp" in2="b" operator="in"/></filter><filter id="w6" filterUnits="userSpaceOnUse" x="0" y="0" width="280" height="148"><feTurbulence type="fractalNoise" baseFrequency="0.09" numOctaves="3" seed="21"/><feColorMatrix values="0 0 0 0 0.93  0 0 0 0 0.93  0 0 0 0 0.9  0 2.5 2.5 0 -2.75"/></filter></defs><rect width="280" height="148" fill="#d3e2b9"/><g filter="url(#b6)"><polygon points="24.6,62.1 39.5,51.4 60.9,48.2 82.3,62.1 97.2,74.9 107.9,89.9 103.6,109.1 97.2,126.2 95.1,149.7 24.6,149.7 18.2,126.2 13.9,98.4" fill="#a8c58d" /><polygon points="99.4,10.8 125.0,6.5 171.8,4.4 171.8,149.7 103.6,149.7 107.9,126.2 116.5,109.1 125.0,92.0 116.5,68.5 107.9,49.3 99.4,32.2" fill="#b2cd98" /><polygon points="111.8,4.4 182.3,4.4 197.3,27.9 197.3,62.1 188.7,87.7 197.3,109.1 203.7,130.5 197.3,149.7 111.8,149.7" fill="#b2cd98" /><polygon points="197.3,-2.0 248.6,-2.0 261.4,45.0 279.5,74.9 279.5,109.1 257.1,117.7 252.8,149.7 203.7,149.7 205.8,109.1 197.3,83.5 201.5,40.7" fill="#d9e5c3" /><polygon points="257.1,114.5 279.5,109.1 279.5,143.3 261.4,143.3" fill="#a8c58d" /></g><g filter="url(#r6)" opacity="0.55"><polygon points="24.6,62.1 39.5,51.4 60.9,48.2 82.3,62.1 97.2,74.9 107.9,89.9 103.6,109.1 97.2,126.2 95.1,149.7 24.6,149.7 18.2,126.2 13.9,98.4" fill="#000" /><polygon points="99.4,10.8 125.0,6.5 171.8,4.4 171.8,149.7 103.6,149.7 107.9,126.2 116.5,109.1 125.0,92.0 116.5,68.5 107.9,49.3 99.4,32.2" fill="#000" /><polygon points="111.8,4.4 182.3,4.4 197.3,27.9 197.3,62.1 188.7,87.7 197.3,109.1 203.7,130.5 197.3,149.7 111.8,149.7" fill="#000" /></g><rect width="280" height="148" filter="url(#w6)" opacity="0.5"/><polygon points="-3.2,99.5 5.3,104.8 9.6,113.4 15.0,121.9 18.2,130.5 18.2,149.7 -3.2,149.7" fill="#7fb0e6" /><polygon points="-3.2,38.6 20.7,40.3 22.0,45.0 19.9,52.5 16.0,55.7 10.7,62.1 6.4,70.6 4.9,81.3 2.8,89.9 0.0,93.1 -3.2,94.2" fill="#987580" /><polygon points="18.2,126.2 23.5,134.8 25.6,149.7 18.2,149.7" fill="#987580" /><polygon points="243.2,-2.0 282.7,-2.0 282.7,61.0 276.3,57.8 271.0,51.4 265.6,47.1 261.4,43.9 257.1,34.3 252.8,23.6 251.8,13.0 248.6,6.5" fill="#7fb0e6" /><polygon points="260.3,48.2 265.6,47.1 271.0,51.4 276.3,57.8 282.7,61.0 282.7,73.9 275.3,71.7 273.1,65.3 268.9,60.0 264.6,54.6" fill="#987580" /><polygon points="264.6,73.9 269.9,71.7 274.2,70.6 276.3,73.9 271.0,78.1 265.6,80.3" fill="#a83a2a" /><polygon points="252.8,49.3 258.2,47.6 258.8,49.3 253.9,51.4" fill="#cf6a40" /><polygon points="-3.2,10.8 4.3,3.3 13.9,4.4 24.6,6.5 37.4,5.5 50.2,6.1 60.9,4.4 66.2,6.5 66.9,11.9 60.9,15.5 51.3,16.8 45.9,18.3 40.6,22.6 37.4,27.9 31.0,24.7 25.6,25.8 23.5,32.2 21.4,39.7 -3.2,38.6" fill="#c25a40" /><polygon points="37.4,16.2 42.7,12.5 48.1,12.5 49.8,16.2 44.9,18.9 38.5,19.4" fill="#d39a5e" /><polygon points="42.1,27.9 46.4,26.2 47.7,29.6 43.4,31.1" fill="#d39a5e" /><polygon points="17.1,121.9 22.4,125.1 26.7,128.3 23.5,130.5 18.2,127.3" fill="#c25a40" /><polygon points="42.7,143.3 46.4,142.2 47.7,149.7 42.1,149.7" fill="#c25a40" /><polygon points="49.2,66.4 52.4,58.9 58.8,55.3 66.2,55.7 70.5,62.1 69.4,69.6 63.0,74.9 55.6,76.0 50.2,71.7" fill="#d39a5e" /><polygon points="35.3,82.4 38.5,78.1 44.9,78.8 49.2,83.5 50.6,92.0 48.1,96.3 42.7,95.2 37.4,92.0" fill="#d39a5e" /><polygon points="51.9,83.5 56.6,82.4 60.9,89.9 62.0,96.3 56.6,98.0 53.4,92.0" fill="#d39a5e" /><polygon points="66.2,89.9 71.6,87.7 76.9,85.6 74.8,92.0 71.6,98.4 76.3,101.6 72.7,102.7 68.4,98.4" fill="#d39a5e" /><polygon points="24.6,95.2 31.0,96.3 38.5,98.4 40.6,100.6 33.1,101.0 26.7,98.4" fill="#d39a5e" /><polygon points="42.7,103.8 48.1,101.6 49.2,107.0 44.9,112.3 42.1,109.1" fill="#d39a5e" /><polygon points="96.2,100.6 104.7,100.1 105.3,104.8 97.2,105.5" fill="#d39a5e" /><polygon points="106.8,97.4 113.3,95.9 116.5,100.6 113.3,103.8 109.0,109.1 104.7,108.0 107.9,103.8" fill="#d39a5e" /><polygon points="119.0,100.6 125.0,101.6 131.0,102.7 129.3,107.0 123.9,108.0 120.3,104.8" fill="#d39a5e" /><polygon points="51.3,139.0 57.7,131.5 59.2,136.9 56.6,144.4 52.8,145.4" fill="#d39a5e" /><polygon points="82.3,141.2 86.5,136.9 88.7,145.4 84.0,146.5" fill="#d39a5e" /><polygon points="90.8,132.6 94.0,131.5 94.7,136.9 91.2,137.3" fill="#d39a5e" /><polygon points="71.6,114.5 75.4,117.7 78.0,126.2 76.3,128.3 73.3,121.9" fill="#7da6d8" /><polygon points="60.5,126.2 63.5,124.1 60.9,134.8 58.8,136.5" fill="#7da6d8" /><polygon points="89.7,94.2 94.0,92.0 91.9,98.4 89.1,100.1" fill="#7da6d8" /><polygon points="24.2,93.1 28.9,95.2 27.8,96.7 23.7,95.2" fill="#7da6d8" /><polygon points="104.7,22.6 109.0,17.2 116.5,16.2 122.9,19.4 122.4,26.8 118.6,32.2 111.1,33.9 105.8,30.1" fill="#cf6a40" /><polygon points="125.7,18.3 128.9,11.9 135.3,10.4 140.6,13.0 139.6,19.4 143.9,26.8 147.1,30.1 149.2,24.7 152.4,17.2 154.5,11.9 157.7,10.8 159.9,16.2 160.5,22.6 164.2,29.0 169.5,25.8 175.9,24.7 177.0,30.1 180.2,32.2 185.5,30.1 188.7,35.4 187.7,40.7 183.4,42.9 182.3,50.4 179.1,49.3 175.9,43.9 170.6,40.7 167.4,38.6 162.0,39.7 157.7,42.9 153.5,41.8 149.2,40.7 146.0,36.5 141.7,32.2 136.4,27.9 131.0,26.8 126.8,25.8" fill="#cf6a40" /><polygon points="116.1,49.3 123.6,45.4 132.1,48.2 136.4,51.4 141.7,49.3 149.2,54.0 155.6,57.8 163.1,56.8 169.5,54.0 178.0,55.3 185.5,57.8 194.1,61.0 193.0,65.3 187.7,68.5 188.7,76.0 184.4,77.5 179.1,72.8 172.7,69.6 166.3,68.5 163.1,70.6 166.3,76.0 169.5,80.3 166.3,83.5 173.8,85.6 180.2,86.0 175.9,89.9 169.5,90.9 163.1,93.1 165.2,98.4 170.6,99.5 173.8,107.0 177.0,113.4 184.4,116.6 182.3,120.9 174.8,121.9 167.4,120.9 164.2,114.5 163.1,104.8 162.0,95.2 156.7,92.0 150.3,89.9 143.9,90.9 137.4,84.5 133.2,77.1 128.9,69.6 124.6,62.1 120.3,55.7" fill="#cf6a40" /><polygon points="144.9,111.2 149.2,108.0 154.5,110.2 157.7,114.5 160.5,121.9 165.2,124.1 173.8,123.0 182.3,121.9 191.9,124.1 199.4,127.3 196.2,130.5 186.6,131.5 180.2,134.8 171.6,132.2 165.2,133.0 158.8,130.5 156.7,125.1 150.3,123.0 145.6,118.7" fill="#cf6a40" /><polygon points="259.2,119.8 265.6,115.1 272.1,113.4 282.7,112.3 282.7,138.0 274.2,134.8 269.9,136.9 265.6,134.8 262.4,140.1 260.3,130.5" fill="#cf6a40" opacity="0.85"/><polygon points="195.1,145.4 201.5,143.9 208.0,146.5 209.0,150.1 194.1,150.1" fill="#cf6a40" /></svg><div class="t cat" style="left:8.4px;top:167.96px;font-size:10.5px;line-height:14px;letter-spacing:-0.08px;">Protected areas</div><svg class="heart" width="18.4" height="16.4" viewBox="0 0 18 16"><path d="M9 14.8 C4.6 11 1.4 8.3 1.4 5.3 C1.4 2.9 3.2 1.2 5.3 1.2 C6.9 1.2 8.3 2.1 9 3.4 C9.7 2.1 11.1 1.2 12.7 1.2 C14.8 1.2 16.6 2.9 16.6 5.3 C16.6 8.3 13.4 11 9 14.8 Z" fill="none" stroke="#5a5a52" stroke-width="1.2" stroke-linejoin="round"/></svg><svg class="keb" width="4" height="11.4" viewBox="0 0 4 11.4"><circle cx="2" cy="1.5" r="1.2" fill="#4a4a44"/><circle cx="2" cy="5.65" r="1.2" fill="#4a4a44"/><circle cx="2" cy="9.8" r="1.2" fill="#4a4a44"/></svg><div class="t ttl" style="left:8.4px;top:191.76px;font-size:13.4px;line-height:18px;letter-spacing:0.04px;">UK: Protected areas</div><div class="t new" style="left:8.4px;top:218.74px;font-size:12px;line-height:15px;letter-spacing:-0.198px;">NEW</div></div>
</div>
</body></html>
